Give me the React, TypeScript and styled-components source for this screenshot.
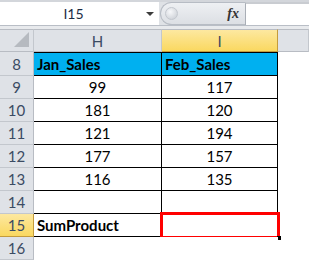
import React from "react";
import styled, { createGlobalStyle } from "styled-components";

const Global = createGlobalStyle`
  html, body { margin: 0; padding: 0; background: #ffffff; }
  body { font-family: "Lato", "Liberation Sans", sans-serif; overflow: hidden; }
`;

const Page = styled.div`
  width: 309px;
  height: 261px;
  background: #ffffff;
  overflow: hidden;
`;

const FormulaBar = styled.div`
  height: 26px;
  display: flex;
  background: #dfe2e6;
  border-top: 2px solid #d3d6db;
  border-bottom: 1px solid #b9bec6;
  box-sizing: border-box;
`;

const NameBox = styled.div`
  width: 159px;
  position: relative;
  background: #ffffff;
  display: flex;
  align-items: center;
  justify-content: center;
  font-size: 14px;
  color: #1b2a44;
  padding-right: 12px;
  box-sizing: border-box;
`;

const DropArrow = styled.span`
  position: absolute;
  right: 5px;
  top: 10px;
  width: 0;
  height: 0;
  border-left: 4px solid transparent;
  border-right: 4px solid transparent;
  border-top: 4px solid #3c3c3c;
`;

const FxArea = styled.div`
  width: 85px;
  display: flex;
  align-items: center;
  justify-content: space-between;
  background: linear-gradient(#eef0f3, #dcdfe4);
  border-radius: 12px 0 0 12px;
  border: 1px solid #b7bcc4;
  border-right: none;
  margin: 0 0 0 1px;
  padding: 0 6px 0 4px;
  box-sizing: border-box;
`;

const Grip = styled.span`
  width: 11px;
  height: 11px;
  border-radius: 50%;
  background: radial-gradient(circle at 40% 35%, #f7f8fa, #c6cad1);
  border: 1px solid #c3c7ce;
`;

const Fx = styled.span`
  font-family: "Liberation Serif", serif;
  font-style: italic;
  font-weight: bold;
  font-size: 14px;
  color: #333;
`;

const FormulaInput = styled.div`
  flex: 1;
  background: #ffffff;
  border-left: 1px solid #a9aeb6;
  border-top: 2px solid #c9ccd1;
`;

const Gap = styled.div`
  height: 3px;
  background: #e8eaed;
`;

const Grid = styled.div`
  display: grid;
  grid-template-columns: 34px 128px 116px 31px;
`;

const ColHead = styled.div<{ $sel?: boolean; $corner?: boolean }>`
  height: 23px;
  box-sizing: border-box;
  border-top: 1px solid #b8bcc3;
  border-bottom: 1px solid ${(p) => (p.$sel ? "#c49b3c" : "#b8bcc3")};
  border-right: 1px solid ${(p) => (p.$sel ? "#c49b3c" : "#c3c7cd")};
  background: ${(p) =>
    p.$sel ? "linear-gradient(#fde8a0, #fad860)" : "#dfe2e7"};
  color: #3b4b63;
  font-size: 15px;
  display: flex;
  align-items: center;
  justify-content: center;
  position: relative;
`;

const CornerTri = styled.span`
  position: absolute;
  right: 4px;
  bottom: 4px;
  width: 0;
  height: 0;
  border-left: 15px solid transparent;
  border-bottom: 15px solid #b6bac0;
`;

const RowHead = styled.div<{ $sel?: boolean; $first?: boolean }>`
  height: ${(p) => (p.$first ? 24 : 23)}px;
  box-sizing: border-box;
  border-bottom: 1px solid ${(p) => (p.$sel ? "#c49b3c" : "#c3c7cd")};
  border-right: 1px solid ${(p) => (p.$sel ? "#c49b3c" : "#b8bcc3")};
  background: ${(p) =>
    p.$sel ? "linear-gradient(#fde8a0, #fad860)" : "#dfe2e7"};
  color: #3b4b63;
  font-size: 15px;
  display: flex;
  align-items: center;
  justify-content: center;
`;

const Cell = styled.div<{
  $head?: boolean;
  $first?: boolean;
  $bold?: boolean;
  $left?: boolean;
  $noRight?: boolean;
  $noBottom?: boolean;
}>`
  height: ${(p) => (p.$first ? 24 : 23)}px;
  box-sizing: border-box;
  border-top: ${(p) => (p.$first ? "1px solid #000" : "none")};
  border-bottom: ${(p) => (p.$noBottom ? "1px solid transparent" : "1px solid #000")};
  border-right: ${(p) => (p.$noRight ? "1px solid transparent" : "1px solid #000")};
  background: ${(p) => (p.$head ? "#00b0f0" : "#ffffff")};
  font-size: 15px;
  font-weight: ${(p) => (p.$bold ? 700 : 400)};
  color: #000;
  display: flex;
  align-items: center;
  justify-content: ${(p) => (p.$left ? "flex-start" : "center")};
  padding-left: ${(p) => (p.$left ? "3px" : "0")};
  position: relative;
`;

const Blank = styled.div<{ $first?: boolean }>`
  height: ${(p) => (p.$first ? 24 : 23)}px;
  background: #ffffff;
`;

const Selection = styled.span`
  position: absolute;
  left: -2px;
  top: -2px;
  right: -3px;
  bottom: -3px;
  border: 3px solid #ff0000;
  box-sizing: border-box;
  pointer-events: none;
`;

const Handle = styled.span`
  position: absolute;
  right: -4px;
  bottom: -4px;
  width: 4px;
  height: 4px;
  background: #000;
`;

const rows: Array<[number, number | null, number | null]> = [
  [9, 99, 117],
  [10, 181, 120],
  [11, 121, 194],
  [12, 177, 157],
  [13, 116, 135],
  [14, null, null],
];

export default function App() {
  return (
    <Page>
      <Global />
      <FormulaBar>
        <NameBox>
          I15
          <DropArrow />
        </NameBox>
        <FxArea>
          <Grip />
          <Fx>fx</Fx>
        </FxArea>
        <FormulaInput />
      </FormulaBar>
      <Gap />
      <Grid>
        <ColHead $corner>
          <CornerTri />
        </ColHead>
        <ColHead>H</ColHead>
        <ColHead $sel>I</ColHead>
        <ColHead />

        <RowHead $first>8</RowHead>
        <Cell $first $head $bold $left>
          Jan_Sales
        </Cell>
        <Cell $first $head $bold $left>
          Feb_Sales
        </Cell>
        <Blank $first />

        {rows.map(([n, a, b]) => (
          <React.Fragment key={n}>
            <RowHead>{n}</RowHead>
            <Cell>{a}</Cell>
            <Cell>{b}</Cell>
            <Blank />
          </React.Fragment>
        ))}

        <RowHead $sel>15</RowHead>
        <Cell $bold $left>
          SumProduct
        </Cell>
        <Cell>
          <Selection />
          <Handle />
        </Cell>
        <Blank />

        <RowHead>16</RowHead>
        <Cell $noRight $noBottom />
        <Cell $noRight $noBottom />
        <Blank />
      </Grid>
    </Page>
  );
}
